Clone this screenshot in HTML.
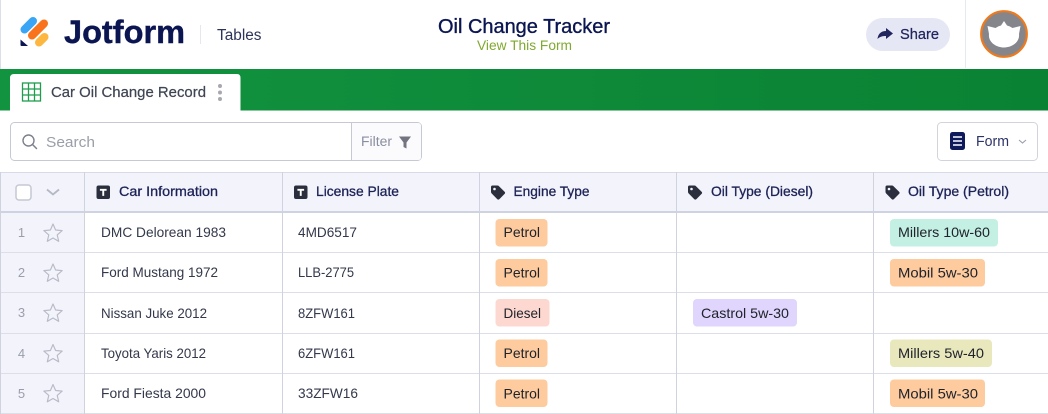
<!DOCTYPE html>
<html lang="en"><head><meta charset="utf-8"><title>Oil Change Tracker</title>
<style>
html,body{margin:0;padding:0;background:#fff;width:1048px;height:414px;overflow:hidden}
svg{display:block}
text{font-family:"Liberation Sans",sans-serif}
.c{font-size:14px;fill:#33384a}
.h{font-size:14px;fill:#1d2256;stroke:#1d2256;stroke-width:.3}
.b{font-size:14px;fill:#20232c}
.n{font-size:13px;fill:#9a9eab}
</style></head><body>
<svg width="1048" height="414" viewBox="0 0 1048 414" xmlns="http://www.w3.org/2000/svg">
<defs>
<linearGradient id="g" x1="0" x2="1" y1="0" y2="0"><stop offset="0" stop-color="#129340"/><stop offset="1" stop-color="#0a8233"/></linearGradient>
<g id="st"><path d="M0-9 2.600-3 9.200-2.400 4.200 1.900 5.700 8.300 0 5-5.700 8.300-4.200 1.900-9.200-2.400-2.600-3Z" fill="none" stroke="#b9bcc8" stroke-width="1.200" stroke-linejoin="round"/></g>
<g id="T"><rect width="13.500" height="13.500" rx="2" fill="#2b2e3c"/><path d="M3.400 3.400H10.100V5.200H7.700V10.400H5.800V5.200H3.400Z" fill="#fff"/></g>
<g id="tag"><path d="M0 1.600Q0 0 1.600 0H6.400Q7.400 0 8 .7L13.600 6.300Q14.600 7.400 13.600 8.400L8.400 13.600Q7.300 14.600 6.200 13.600L.7 8Q0 7.400 0 6.400Z" fill="#2b2e3c"/><circle cx="3.500" cy="3.500" r="1.300" fill="#f2f3fb"/></g>
</defs>
<rect width="1048" height="414" fill="#fff"/>
<rect x="0" y="0" width="1" height="69" fill="#dcdeea"/>

<!-- logo -->
<g stroke-linecap="round" fill="none">
<path d="M24.500 29.500 33 21" stroke="#3aa5f5" stroke-width="8"/>
<path d="M32 35.500 44 23.500" stroke="#f9731c" stroke-width="8"/>
<path d="M39 42.500 44.500 37" stroke="#fdb740" stroke-width="8"/>
</g>
<path d="M20.500 39.500V45a1 1 0 0 0 1 1H28Z" fill="#0a1551"/>
<text x="64" y="43" font-size="32" font-weight="700" fill="#0a1551" stroke="#0a1551" stroke-width=".4" textLength="121" lengthAdjust="spacingAndGlyphs">Jotform</text>
<rect x="200" y="25" width="1" height="19" fill="#e6e7ee"/>
<text x="217" y="40" font-size="15.500" fill="#2c3357" textLength="44.500" lengthAdjust="spacingAndGlyphs">Tables</text>

<!-- title -->
<text x="438" y="33" font-size="20" fill="#0a1551" stroke="#0a1551" stroke-width=".35" textLength="172" lengthAdjust="spacingAndGlyphs">Oil Change Tracker</text>
<text x="477" y="50" font-size="13.500" fill="#7fa92f" textLength="95" lengthAdjust="spacingAndGlyphs">View This Form</text>

<!-- share -->
<rect x="866" y="18" width="84" height="33" rx="16.500" fill="#e6e7f4"/>
<path d="M893 33.500 886 28V31C881 31 878 34 877.500 39C880 36.500 882.500 36 886 36V39Z" fill="#22265f"/>
<text x="900" y="39" font-size="14.500" fill="#22265f" stroke="#22265f" stroke-width=".25" textLength="39" lengthAdjust="spacingAndGlyphs">Share</text>

<!-- avatar -->
<rect x="965" y="0" width="1" height="68" fill="#e8e9ef"/>
<circle cx="1004" cy="34" r="22.800" fill="#85868c" stroke="#ee7a1e" stroke-width="2.200"/>
<path d="M987.500 26 995.500 28Q998.500 26 1001 25.500L1004 21 1007 25.500Q1009.500 26 1012.500 28L1020.500 26 1019 34C1020 42 1012 47.500 1004 47.500C996 47.500 988 42 989 34Z" fill="#fff"/>

<!-- green band -->
<rect x="0" y="69" width="1048" height="41.500" fill="url(#g)"/>
<path d="M10 110.500V78Q10 74 14 74H237Q240.500 74 240.500 78V110.500Z" fill="#fff"/>
<g fill="none" stroke="#1f9d4d" stroke-width="1.300">
<rect x="22.500" y="83" width="18" height="18"/>
<path d="M22.500 89H40.500M22.500 95H40.500M28.500 83V101M34.500 83V101"/>
</g>
<text x="51" y="97" font-size="14.500" fill="#3e4452" stroke="#3e4452" stroke-width=".2" textLength="155" lengthAdjust="spacingAndGlyphs">Car Oil Change Record</text>
<circle cx="220" cy="86" r="2" fill="#a7a9b0"/><circle cx="220" cy="92.500" r="2" fill="#a7a9b0"/><circle cx="220" cy="99" r="2" fill="#a7a9b0"/>

<!-- search -->
<rect x="10.500" y="122.500" width="411" height="38" rx="4" fill="#fff" stroke="#c6c9d4"/>
<path d="M351 123H418Q421 123 421 126V157Q421 160 418 160H351Z" fill="#fbfbfd"/>
<rect x="351" y="123" width="1" height="37" fill="#c6c9d4"/>
<circle cx="28.500" cy="140.500" r="5.500" fill="none" stroke="#7d818d" stroke-width="1.400"/>
<path d="M32.500 144.500 36.500 148.500" stroke="#7d818d" stroke-width="1.500" stroke-linecap="round"/>
<text x="46" y="147" font-size="15" fill="#9a9ea8" textLength="49" lengthAdjust="spacingAndGlyphs">Search</text>
<text x="361" y="146" font-size="13.500" fill="#8a8fa0" textLength="31" lengthAdjust="spacingAndGlyphs">Filter</text>
<path d="M399 136.500H411L406.500 142.500V148.500L403.500 147V142.500Z" fill="#72757f"/>

<!-- form button -->
<rect x="937.500" y="122.500" width="100" height="38" rx="4" fill="#fff" stroke="#d2d4dd"/>
<rect x="950" y="132" width="15" height="18" rx="2.500" fill="#0f1a5c"/>
<path d="M953 137H962M953 141H962M953 145H962" stroke="#fff" stroke-width="1.600"/>
<text x="976" y="146" font-size="15" fill="#2c3367" textLength="33" lengthAdjust="spacingAndGlyphs">Form</text>
<path d="M1019 140 1022.500 143 1026 140" fill="none" stroke="#9a9dab" stroke-width="1.100"/>

<!-- table -->
<rect x="0" y="172" width="1048" height="40" fill="#f2f3fb"/>
<rect x="0" y="212" width="84" height="202" fill="#f3f4fb"/>
<rect x="0" y="172" width="1048" height="1" fill="#d8dae6"/>
<rect x="0" y="211" width="1048" height="2" fill="#cfd2df"/>
<g fill="#dcdfe8">
<rect y="252" width="1048" height="1"/><rect y="292" width="1048" height="1"/><rect y="333" width="1048" height="1"/><rect y="373" width="1048" height="1"/><rect y="413" width="1048" height="1"/>
</g>
<g fill="#d0d3df">
<rect x="0" y="172" width="1" height="242"/><rect x="84" y="172" width="1" height="242"/><rect x="282" y="172" width="1" height="242"/><rect x="479" y="172" width="1" height="242"/><rect x="676" y="172" width="1" height="242"/><rect x="873" y="172" width="1" height="242"/>
</g>

<rect x="16" y="185" width="15" height="15" rx="3" fill="#fff" stroke="#c5c8d3" stroke-width="1.500"/>
<path d="M47 189.500 53 194.500 59 189.500" fill="none" stroke="#b5b8c5" stroke-width="1.800"/>

<use href="#T" x="96.500" y="185.500"/><use href="#T" x="294" y="185.500"/>
<use href="#tag" x="491" y="185.500"/><use href="#tag" x="688" y="185.500"/><use href="#tag" x="885.500" y="185.500"/>
<text class="h" x="119" y="196" textLength="99" lengthAdjust="spacingAndGlyphs">Car Information</text>
<text class="h" x="316" y="196" textLength="83" lengthAdjust="spacingAndGlyphs">License Plate</text>
<text class="h" x="513.500" y="196" textLength="76" lengthAdjust="spacingAndGlyphs">Engine Type</text>
<text class="h" x="711" y="196" textLength="102" lengthAdjust="spacingAndGlyphs">Oil Type (Diesel)</text>
<text class="h" x="908" y="196" textLength="101" lengthAdjust="spacingAndGlyphs">Oil Type (Petrol)</text>

<text class="n" x="21.500" y="237" text-anchor="middle">1</text>
<text class="n" x="21.500" y="277" text-anchor="middle">2</text>
<text class="n" x="21.500" y="317" text-anchor="middle">3</text>
<text class="n" x="21.500" y="358" text-anchor="middle">4</text>
<text class="n" x="21.500" y="398" text-anchor="middle">5</text>
<use href="#st" x="53" y="233"/><use href="#st" x="53" y="273"/><use href="#st" x="53" y="313"/><use href="#st" x="53" y="353.500"/><use href="#st" x="53" y="393.500"/>

<text class="c" x="101" y="237" textLength="125" lengthAdjust="spacingAndGlyphs">DMC Delorean 1983</text>
<text class="c" x="101" y="277" textLength="117" lengthAdjust="spacingAndGlyphs">Ford Mustang 1972</text>
<text class="c" x="101" y="318" textLength="106" lengthAdjust="spacingAndGlyphs">Nissan Juke 2012</text>
<text class="c" x="101" y="358" textLength="105" lengthAdjust="spacingAndGlyphs">Toyota Yaris 2012</text>
<text class="c" x="101" y="398" textLength="105" lengthAdjust="spacingAndGlyphs">Ford Fiesta 2000</text>

<text class="c" x="298" y="237" textLength="59" lengthAdjust="spacingAndGlyphs">4MD6517</text>
<text class="c" x="298" y="277" textLength="56" lengthAdjust="spacingAndGlyphs">LLB-2775</text>
<text class="c" x="298" y="318" textLength="57" lengthAdjust="spacingAndGlyphs">8ZFW161</text>
<text class="c" x="298" y="358" textLength="57" lengthAdjust="spacingAndGlyphs">6ZFW161</text>
<text class="c" x="298" y="398" textLength="60" lengthAdjust="spacingAndGlyphs">33ZFW16</text>

<rect x="495.500" y="219" width="52" height="27.500" rx="4" fill="#fdcb9e"/><text class="b" x="503.500" y="237" textLength="36.500" lengthAdjust="spacingAndGlyphs">Petrol</text>
<rect x="495.500" y="259" width="52" height="27.500" rx="4" fill="#fdcb9e"/><text class="b" x="503.500" y="277.500" textLength="36.500" lengthAdjust="spacingAndGlyphs">Petrol</text>
<rect x="495.500" y="299" width="54" height="27.500" rx="4" fill="#fdd8d0"/><text class="b" x="503.500" y="318" textLength="37.500" lengthAdjust="spacingAndGlyphs">Diesel</text>
<rect x="495.500" y="339.500" width="52" height="27.500" rx="4" fill="#fdcb9e"/><text class="b" x="503.500" y="358" textLength="36.500" lengthAdjust="spacingAndGlyphs">Petrol</text>
<rect x="495.500" y="379.500" width="52" height="27.500" rx="4" fill="#fdcb9e"/><text class="b" x="503.500" y="398.500" textLength="36.500" lengthAdjust="spacingAndGlyphs">Petrol</text>

<rect x="693" y="299" width="104" height="27.500" rx="4" fill="#dfd5fd"/><text class="b" x="701" y="318" textLength="88" lengthAdjust="spacingAndGlyphs">Castrol 5w-30</text>

<rect x="890" y="219" width="108" height="27.500" rx="4" fill="#c3f0e3"/><text class="b" x="898" y="237" textLength="92" lengthAdjust="spacingAndGlyphs">Millers 10w-60</text>
<rect x="890" y="259" width="95" height="27.500" rx="4" fill="#fdcb9e"/><text class="b" x="898" y="277.500" textLength="80" lengthAdjust="spacingAndGlyphs">Mobil 5w-30</text>
<rect x="890" y="339.500" width="102" height="27.500" rx="4" fill="#e9e8bd"/><text class="b" x="898" y="358" textLength="86" lengthAdjust="spacingAndGlyphs">Millers 5w-40</text>
<rect x="890" y="379.500" width="95" height="27.500" rx="4" fill="#fdcb9e"/><text class="b" x="898" y="398.500" textLength="80" lengthAdjust="spacingAndGlyphs">Mobil 5w-30</text>
</svg>
</body></html>
